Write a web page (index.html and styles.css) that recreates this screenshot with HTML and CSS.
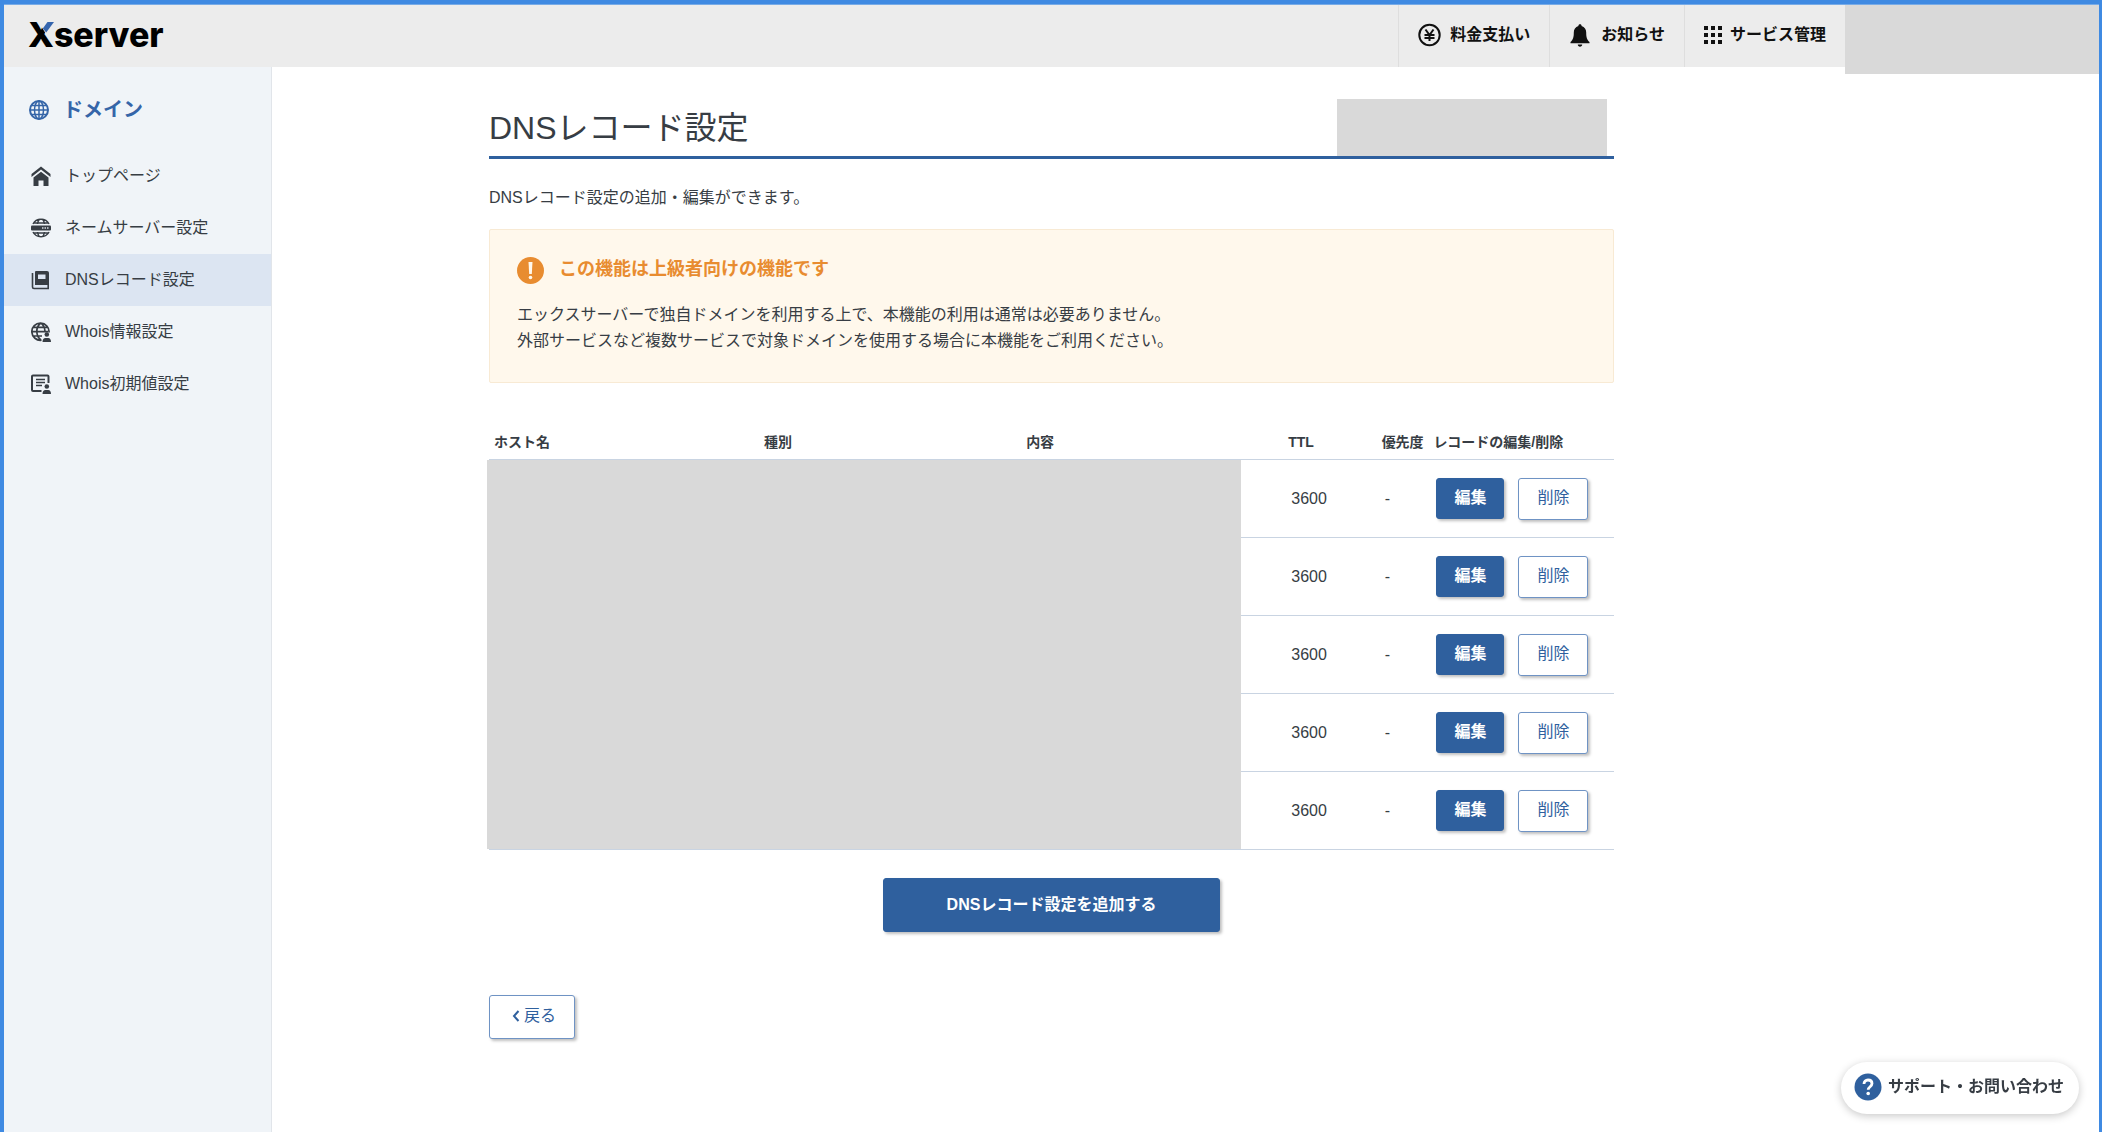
FILE: index.html
```html
<!DOCTYPE html>
<html lang="ja">
<head>
<meta charset="utf-8">
<meta name="viewport" content="width=device-width, initial-scale=1">
<title>DNSレコード設定 | Xserver</title>
<link rel="stylesheet" href="styles.css">
</head>
<body>
<header class="header">
  <a class="logo" href="#">Xserver
    <svg class="logo-accent" viewBox="0 0 14 12" aria-hidden="true"><path d="M3 0H14V4L5 12L0 4Z" fill="#ececec"/><path d="M6.500 0H13L5.200 10.500L1.800 6.500Z" fill="#3565ad"/></svg>
  </a>
  <nav class="header-nav" aria-label="アカウント">
    <a class="header-link" href="#">
      <svg width="24" height="24" viewBox="0 0 24 24" fill="none" stroke="#111" stroke-width="2" aria-hidden="true"><circle cx="11.500" cy="12" r="10.200"/><path d="M7.500 6.500l4 5.500l4-5.500M11.500 12v6M6.500 12h10M6.500 15h10"/></svg>
      <span>料金支払い</span>
    </a>
    <a class="header-link" href="#">
      <svg width="24" height="24" viewBox="0 0 24 24" fill="#111" aria-hidden="true"><path d="M11 1.200c1 0 1.600.7 1.600 1.700 3 .8 4.600 3.400 4.600 6.600 0 5 .8 7.200 3.300 9.500v1.200H1.500V19c2.500-2.300 3.300-4.500 3.300-9.500 0-3.200 1.600-5.800 4.600-6.600 0-1 .6-1.700 1.600-1.700zM8.800 21.500h4.400c0 1.300-.9 2.200-2.200 2.200s-2.200-.9-2.200-2.200z"/></svg>
      <span>お知らせ</span>
    </a>
    <a class="header-link" href="#">
      <svg width="18" height="18" viewBox="0 0 18 18" fill="#111" aria-hidden="true"><path d="M0 0h4v4H0zM7 0h4v4H7zM14 0h4v4h-4zM0 7h4v4H0zM7 7h4v4H7zM14 7h4v4h-4zM0 14h4v4H0zM7 14h4v4H7zM14 14h4v4h-4z"/></svg>
      <span>サービス管理</span>
    </a>
    <div class="account"></div>
  </nav>
</header>

<div class="layout">
  <aside class="sidebar">
    <h2 class="sidebar-title">
      <svg width="20" height="20" viewBox="0 0 20 20" fill="none" stroke="#3565a8" stroke-width="1.500" aria-hidden="true"><circle cx="10" cy="10" r="9" stroke-width="2"/><ellipse cx="10" cy="10" rx="4.500" ry="9"/><path d="M10 1v18M1 10h18M3 5.500h14M3 14.500h14"/></svg>
      ドメイン
    </h2>
    <nav aria-label="ドメイン">
      <ul class="menu">
        <li><a class="menu-link" href="#">
          <svg width="20" height="20" viewBox="0 0 20 20" fill="#373d44" aria-hidden="true"><path d="M10 .5L19.500 8v3L10 3.600L.5 11V8zM10 5.700L17.500 11.500V20H12.500V14.500H7.500V20H2.500V11.500z"/></svg>
          トップページ</a></li>
        <li><a class="menu-link" href="#">
          <svg width="20" height="20" viewBox="0 0 20 20" aria-hidden="true"><g fill="none" stroke="#373d44" stroke-width="1.500"><path d="M2 6C3.500 3 6.500 1.300 10 1.300S16.500 3 18 6M2 14c1.500 3 4.500 4.700 8 4.700s6.500-1.700 8-4.700M6.500 6C6.700 4 7.700 2 9 1M13.500 6C13.300 4 12.300 2 11 1M6.500 14c.2 2 1.200 4 2.500 5M13.500 14c-.2 2-1.200 4-2.500 5M2.500 5h15M2.500 15h15"/></g><rect y="7.500" width="20" height="5" rx="1" fill="#373d44"/><path d="M11 9h1.500v2H11zM13.500 9H15v2h-1.500zM16 9h1.500v2H16z" fill="#aeb4bb"/></svg>
          ネームサーバー設定</a></li>
        <li><a class="menu-link is-active" href="#" aria-current="page">
          <svg width="20" height="20" viewBox="0 0 20 20" aria-hidden="true"><path d="M5 1h11a2 2 0 0 1 2 2v12H4V2a1 1 0 0 1 1-1z" fill="#373d44"/><path d="M7 4.500h7.500v4.500H7z" fill="#dce5f2"/><path d="M1.500 3v14a1.500 1.500 0 0 0 1.500 1.500H17.200V14" fill="none" stroke="#373d44" stroke-width="1.600"/></svg>
          DNSレコード設定</a></li>
        <li><a class="menu-link" href="#">
          <svg width="20" height="20" viewBox="0 0 20 20" aria-hidden="true"><path d="M10.500 18.200A8.600 8.600 0 1 1 18 10.500M10 18C4.500 14 4.500 5 9.600 1.200M10 1.200c2.600 2 3.800 5 4 8M1 9.700h16M2.500 5.300h14.500M2.500 14h8.500" fill="none" stroke="#373d44" stroke-width="1.700"/><circle cx="15.800" cy="12.500" r="2.300" fill="#373d44"/><path d="M11.500 20c0-2.500 1.300-4 2.800-4h3c1.500 0 2.700 1.500 2.700 4z" fill="#373d44"/></svg>
          Whois情報設定</a></li>
        <li><a class="menu-link" href="#">
          <svg width="20" height="20" viewBox="0 0 20 20" aria-hidden="true"><path d="M10.500 17H2a1 1 0 0 1-1-1V2.500a1 1 0 0 1 1-1h14.500a1 1 0 0 1 1 1V9" fill="none" stroke="#373d44" stroke-width="2"/><path d="M5 5.500h9M5 8.500h9M5 11.500h6" stroke="#373d44" stroke-width="1.500"/><circle cx="15.800" cy="12.500" r="2.300" fill="#373d44"/><path d="M11.500 20c0-2.500 1.300-4 2.800-4h3c1.500 0 2.700 1.500 2.700 4z" fill="#373d44"/></svg>
          Whois初期値設定</a></li>
      </ul>
    </nav>
  </aside>

  <main class="main">
    <div class="content">
      <div class="page-head">
        <h1 class="page-title">DNSレコード設定</h1>
        <div class="domain-box"></div>
      </div>
      <p class="lead">DNSレコード設定の追加・編集ができます。</p>

      <section class="alert">
        <h2 class="alert-title">
          <svg width="27" height="27" viewBox="0 0 27 27" aria-hidden="true"><circle cx="13.500" cy="13.500" r="13.500" fill="#e88c30"/><path d="M11.500 5h4l-.7 12h-2.600z" fill="#fff8ec"/><circle cx="13.500" cy="20.500" r="1.800" fill="#fff8ec"/></svg>
          <span>この機能は上級者向けの機能です</span>
        </h2>
        <p class="alert-text">エックスサーバーで独自ドメインを利用する上で、本機能の利用は通常は必要ありません。<br>外部サービスなど複数サービスで対象ドメインを使用する場合に本機能をご利用ください。</p>
      </section>

      <div class="records">
        <table class="record-table">
          <colgroup><col class="col-host"><col class="col-type"><col class="col-value"><col class="col-ttl"><col class="col-priority"><col></colgroup>
          <thead>
            <tr><th scope="col">ホスト名</th><th scope="col">種別</th><th scope="col">内容</th><th scope="col">TTL</th><th scope="col">優先度</th><th scope="col">レコードの編集/削除</th></tr>
          </thead>
          <tbody>
            <tr><td></td><td></td><td></td><td>3600</td><td>-</td><td><div class="actions"><button class="btn btn-edit" type="button">編集</button><button class="btn btn-delete" type="button">削除</button></div></td></tr>
            <tr><td></td><td></td><td></td><td>3600</td><td>-</td><td><div class="actions"><button class="btn btn-edit" type="button">編集</button><button class="btn btn-delete" type="button">削除</button></div></td></tr>
            <tr><td></td><td></td><td></td><td>3600</td><td>-</td><td><div class="actions"><button class="btn btn-edit" type="button">編集</button><button class="btn btn-delete" type="button">削除</button></div></td></tr>
            <tr><td></td><td></td><td></td><td>3600</td><td>-</td><td><div class="actions"><button class="btn btn-edit" type="button">編集</button><button class="btn btn-delete" type="button">削除</button></div></td></tr>
            <tr><td></td><td></td><td></td><td>3600</td><td>-</td><td><div class="actions"><button class="btn btn-edit" type="button">編集</button><button class="btn btn-delete" type="button">削除</button></div></td></tr>
          </tbody>
        </table>
        <div class="records-mask"></div>
      </div>

      <button class="btn btn-add" type="button">DNSレコード設定を追加する</button>
      <button class="btn btn-back" type="button">
        <svg width="8" height="12" viewBox="0 0 8 12" fill="none" stroke="#2f609e" stroke-width="2" aria-hidden="true"><path d="M6.500 1L2 6l4.500 5"/></svg>
        戻る
      </button>
    </div>
  </main>
</div>

<button class="support" type="button">
  <svg width="28" height="28" viewBox="0 0 28 28" aria-hidden="true"><circle cx="14" cy="14" r="13.500" fill="#2f609e"/><path d="M10 11c0-2.400 1.700-4 4-4s4 1.400 4 3.600c0 3-3.800 3.200-3.800 6.200" fill="none" stroke="#fff" stroke-width="2.800"/><circle cx="14.200" cy="20.500" r="1.800" fill="#fff"/></svg>
  サポート・お問い合わせ
</button>
</body>
</html>
```
FILE: styles.css
```css
*,
*::before,
*::after {
  box-sizing: border-box;
}

body {
  display: flex;
  flex-direction: column;
  min-height: 100vh;
  margin: 0;
  border: solid #3f8ae2;
  border-width: 4px 3px 0 4px;
  background: #fff;
  color: #373d44;
  font: 16px/26px "Liberation Sans", "Noto Sans CJK JP", sans-serif;
}

h1,
h2,
p,
ul {
  margin: 0;
  padding: 0;
}

a {
  color: inherit;
  text-decoration: none;
}

svg {
  flex: none;
}

/* Header */
.header {
  display: flex;
  justify-content: space-between;
  height: 63px;
  border-top: 1px solid #78abe6;
  background: #ececec;
}

.logo {
  position: relative;
  align-self: flex-start;
  margin: 6px 0 0 24px;
  color: #000;
  font: 800 34px/48px Inter, sans-serif;
}

.logo-accent {
  position: absolute;
  top: 11px;
  left: 13px;
  width: 14px;
  height: 12px;
}

.header-nav {
  display: flex;
}

.header-link {
  display: flex;
  align-items: center;
  gap: 8px;
  padding: 0 19px 2px;
  border-left: 1px solid #dedede;
  color: #111;
  font-weight: 700;
}

.account {
  width: 254px;
  height: 69px;
  background: #d9d9d9;
}

/* Sidebar */
.layout {
  display: flex;
  flex: 1;
}

.sidebar {
  flex: none;
  width: 268px;
  padding-top: 30px;
  border-right: 1px solid #e1e5ea;
  background: #f0f4f8;
}

.sidebar-title {
  display: flex;
  align-items: center;
  gap: 14px;
  margin-bottom: 27px;
  padding-left: 25px;
  color: #3565a8;
  font-size: 20px;
}

.menu {
  list-style: none;
}

.menu-link {
  display: flex;
  align-items: center;
  gap: 14px;
  height: 52px;
  padding-left: 27px;
}

.menu-link.is-active {
  background: #dce5f2;
}

/* Main column, centred on the whole window */
.main {
  flex: 1;
  padding: 32px 268px 32px 0;
}

.content {
  display: flex;
  flex-direction: column;
  max-width: 1125px;
  margin: 0 auto;
}

.page-head {
  display: flex;
  align-items: center;
  justify-content: space-between;
  padding-right: 7px;
  border-bottom: 3px solid #2f609e;
}

.page-title {
  font-size: 32px;
  font-weight: 400;
  line-height: 48px;
}

.domain-box {
  width: 270px;
  height: 57px;
  background: #d9d9d9;
}

.lead {
  margin: 26px 0 18px;
}

.alert {
  padding: 27px 27px 28px;
  border: 1px solid #f8ead4;
  border-radius: 2px;
  background: #fff8ec;
}

.alert-title {
  display: flex;
  gap: 15px;
  margin-bottom: 18px;
  color: #e88c30;
  font-size: 18px;
  line-height: 24px;
}

/* Records */
.records {
  position: relative;
  margin-top: 42px;
}

.record-table {
  width: 100%;
  border-spacing: 0;
  table-layout: fixed;
}

.record-table th,
.record-table td {
  padding: 4px 5px;
  border-bottom: 1px solid #c9d4e2;
  text-align: left;
  white-space: nowrap;
}

.record-table th {
  font-size: 14px;
}

.record-table td {
  height: 78px;
  padding: 0 8px;
}

.col-host {
  width: 24%;
}

.col-type,
.col-value {
  width: 23.3%;
}

.col-ttl {
  width: 8.3%;
}

.col-priority {
  width: 4.6%;
}

.records-mask {
  position: absolute;
  top: 35px;
  bottom: 1px;
  left: -2px;
  width: 67%;
  background: #d9d9d9;
}

.actions {
  display: flex;
  align-items: center;
  gap: 14px;
}

/* Buttons */
.btn {
  border: 1px solid #2f609e;
  border-radius: 3px;
  box-shadow: 2px 2px 3px rgba(0, 0, 0, 0.25);
  font: inherit;
  cursor: pointer;
}

.btn-edit,
.btn-add {
  background: #2f609e;
  color: #fff;
  font-weight: 700;
}

.btn-delete,
.btn-back {
  border-color: #6f93c4;
  background: #fff;
  color: #2f609e;
}

.btn-edit {
  height: 41px;
  padding: 0 17px 2px;
}

.btn-delete {
  height: 42px;
  padding: 0 18px 2px;
}

.btn-add {
  align-self: center;
  width: 30%;
  height: 54px;
  margin-top: 28px;
}

.btn-back {
  display: flex;
  align-items: center;
  align-self: flex-start;
  gap: 4px;
  height: 44px;
  margin-top: 63px;
  padding: 0 18px 2px 22px;
}

.support {
  position: fixed;
  right: 23px;
  bottom: 18px;
  display: flex;
  align-items: center;
  gap: 6px;
  height: 52px;
  padding: 0 15px 2px 13px;
  border: 0;
  border-radius: 26px;
  background: #fff;
  box-shadow: 0 2px 8px rgba(0, 0, 0, 0.22);
  color: #373d44;
  font: inherit;
  font-weight: 700;
  cursor: pointer;
}
```
